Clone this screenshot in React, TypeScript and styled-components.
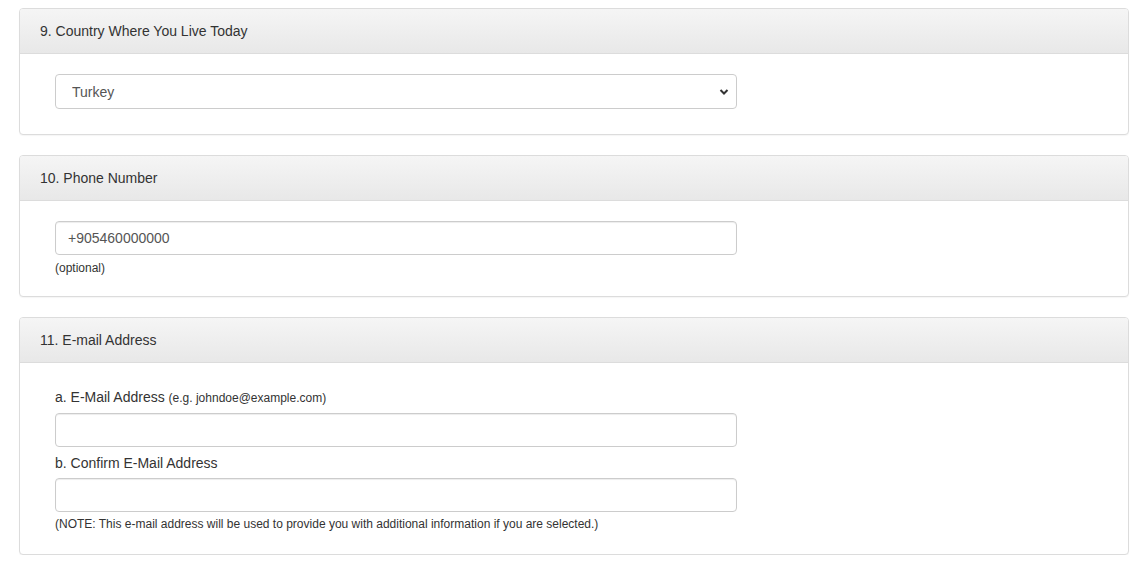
import React from "react";
import styled, { createGlobalStyle } from "styled-components";

const Global = createGlobalStyle`
  html, body { margin: 0; padding: 0; background: #fff; }
  body { font-family: "Liberation Sans", Arial, sans-serif; font-size: 14px; line-height: 1.42857; color: #333; }
  * { box-sizing: border-box; }
`;

const Page = styled.div`
  padding: 8px 0 0 19px;
  width: 1129px;
  display: flex;
  flex-direction: column;
  gap: 20px;
`;

const Panel = styled.section`
  border: 1px solid #dcdcdc;
  border-radius: 4px;
  background: #fff;
  box-shadow: 0 1px 1px rgba(0, 0, 0, 0.04);
  overflow: hidden;
`;

const PanelHeading = styled.div`
  padding: 12px 20px;
  height: 45px;
  border-bottom: 1px solid #dcdcdc;
  background: linear-gradient(to bottom, #f5f5f5 0%, #e8e8e8 100%);
  color: #333;
  font-size: 14px;
  line-height: 20px;
`;

const PanelBody = styled.div<{ $top?: number; $bottom?: number }>`
  padding: ${(p) => p.$top ?? 20}px 35px ${(p) => p.$bottom ?? 25}px 35px;
  display: flex;
  flex-direction: column;
`;

const Field = styled.div`
  width: 682px;
  display: flex;
  flex-direction: column;
`;

const Label = styled.label<{ $mt?: number }>`
  font-size: 14px;
  line-height: 20px;
  color: #333;
  margin: ${(p) => p.$mt ?? 0}px 0 5px 0;
`;

const Hint = styled.span`
  font-size: 12px;
`;

const Input = styled.input`
  width: 100%;
  height: 34px;
  padding: 6px 12px;
  font-family: "Liberation Sans", Arial, sans-serif;
  font-size: 14px;
  color: #555;
  background: #fff;
  border: 1px solid #ccc;
  border-radius: 4px;
  box-shadow: inset 0 1px 1px rgba(0, 0, 0, 0.075);
  outline: none;
`;

const SelectWrap = styled.div`
  position: relative;
  width: 100%;
`;

const Select = styled.select`
  width: 100%;
  height: 35px;
  padding: 6px 12px 6px 16px;
  font-family: "Liberation Sans", Arial, sans-serif;
  font-size: 14px;
  color: #555;
  background: #fff;
  border: 1px solid #ccc;
  border-radius: 4px;
  appearance: none;
  -webkit-appearance: none;
  outline: none;
`;

const Chevron = styled.svg`
  position: absolute;
  right: 8px;
  top: 14px;
  width: 10px;
  height: 8px;
  pointer-events: none;
`;

const HelpText = styled.div<{ $mt?: number }>`
  font-size: 12px;
  line-height: 17px;
  color: #333;
  margin-top: ${(p) => p.$mt ?? 2}px;
`;

export default function App() {
  return (
    <>
      <Global />
      <Page>
        <Panel>
          <PanelHeading>9. Country Where You Live Today</PanelHeading>
          <PanelBody $top={20} $bottom={25}>
            <Field>
              <SelectWrap>
                <Select defaultValue="Turkey">
                  <option>Turkey</option>
                </Select>
                <Chevron viewBox="0 0 10 8">
                  <path d="M1.5 2 L5 5.5 L8.5 2" fill="none" stroke="#333" strokeWidth="2" />
                </Chevron>
              </SelectWrap>
            </Field>
          </PanelBody>
        </Panel>

        <Panel>
          <PanelHeading>10. Phone Number</PanelHeading>
          <PanelBody $top={20} $bottom={19}>
            <Field>
              <Input defaultValue="+905460000000" />
              <HelpText $mt={5}>(optional)</HelpText>
            </Field>
          </PanelBody>
        </Panel>

        <Panel>
          <PanelHeading>11. E-mail Address</PanelHeading>
          <PanelBody $top={24} $bottom={21}>
            <Field>
              <Label>
                a. E-Mail Address <Hint>(e.g. johndoe@example.com)</Hint>
              </Label>
              <Input />
              <Label $mt={6}>b. Confirm E-Mail Address</Label>
              <Input />
              <HelpText $mt={4}>
                (NOTE: This e-mail address will be used to provide you with additional information if you are selected.)
              </HelpText>
            </Field>
          </PanelBody>
        </Panel>
      </Page>
    </>
  );
}
